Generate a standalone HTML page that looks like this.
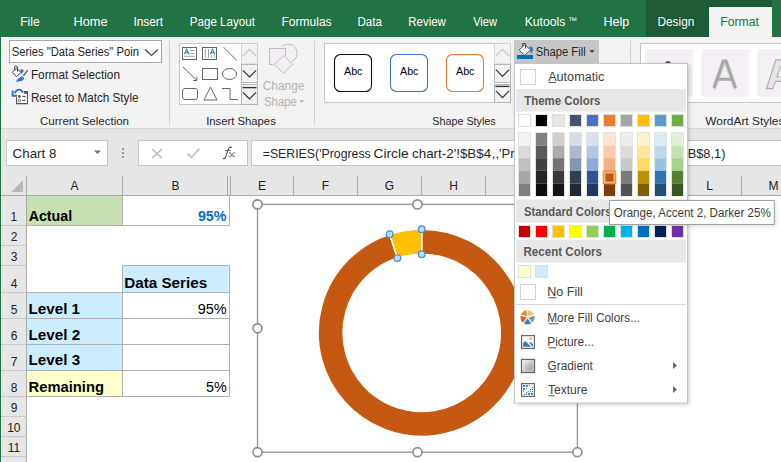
<!DOCTYPE html><html><head><meta charset="utf-8"><style>html,body{margin:0;padding:0;background:#fff;overflow:hidden}svg{display:block}</style></head><body><svg width="781" height="462" viewBox="0 0 781 462"><rect x="0" y="0" width="781" height="37" fill="#217346" />
<rect x="646" y="0" width="126" height="37" fill="#1c5b35" />
<rect x="709" y="7" width="63" height="30" fill="#f3f3f3" />
<text x="20.31" y="25.8" font-family="Liberation Sans" font-size="12.5" fill="#ffffff" textLength="19.32" lengthAdjust="spacingAndGlyphs" >File</text>
<text x="73.55" y="25.8" font-family="Liberation Sans" font-size="12.5" fill="#ffffff" textLength="33.99" lengthAdjust="spacingAndGlyphs" >Home</text>
<text x="133.40" y="25.8" font-family="Liberation Sans" font-size="12.5" fill="#ffffff" textLength="29.70" lengthAdjust="spacingAndGlyphs" >Insert</text>
<text x="189.74" y="25.8" font-family="Liberation Sans" font-size="12.5" fill="#ffffff" textLength="65.15" lengthAdjust="spacingAndGlyphs" >Page Layout</text>
<text x="281.41" y="25.8" font-family="Liberation Sans" font-size="12.5" fill="#ffffff" textLength="50.22" lengthAdjust="spacingAndGlyphs" >Formulas</text>
<text x="357.44" y="25.8" font-family="Liberation Sans" font-size="12.5" fill="#ffffff" textLength="24.56" lengthAdjust="spacingAndGlyphs" >Data</text>
<text x="408.25" y="25.8" font-family="Liberation Sans" font-size="12.5" fill="#ffffff" textLength="37.60" lengthAdjust="spacingAndGlyphs" >Review</text>
<text x="473.14" y="25.8" font-family="Liberation Sans" font-size="12.5" fill="#ffffff" textLength="23.82" lengthAdjust="spacingAndGlyphs" >View</text>
<text x="524.69" y="25.8" font-family="Liberation Sans" font-size="12.5" fill="#ffffff" textLength="40.74" lengthAdjust="spacingAndGlyphs" >Kutools</text>
<text x="603.47" y="25.8" font-family="Liberation Sans" font-size="12.5" fill="#ffffff" textLength="25.76" lengthAdjust="spacingAndGlyphs" >Help</text>
<text x="657.42" y="25.8" font-family="Liberation Sans" font-size="12.5" fill="#ffffff" textLength="36.92" lengthAdjust="spacingAndGlyphs" >Design</text>
<text x="720.19" y="25.8" font-family="Liberation Sans" font-size="12.5" fill="#217346" textLength="38.69" lengthAdjust="spacingAndGlyphs" >Format</text>
<text x="567.96" y="23.6" font-family="Liberation Sans" font-size="9.5" fill="#ffffff" textLength="9.06" lengthAdjust="spacingAndGlyphs" >™</text>
<rect x="0" y="37" width="781" height="92" fill="#f3f3f3" />
<line x1="0" y1="128.5" x2="781" y2="128.5" stroke="#d6d6d6" stroke-width="1" />
<rect x="9.5" y="40.5" width="152" height="22" fill="#ffffff" stroke="#a6a6a6" stroke-width="1" />
<text x="11.79" y="55.9" font-family="Liberation Sans" font-size="12" fill="#262626" textLength="127.12" lengthAdjust="spacingAndGlyphs" >Series &quot;Data Series&quot; Poin</text>
<polyline points="145,49.5 151.5,55.5 158,49.5" fill="none" stroke="#444" stroke-width="1.2"/>
<text x="30.93" y="78.8" font-family="Liberation Sans" font-size="12" fill="#262626" textLength="89.02" lengthAdjust="spacingAndGlyphs" >Format Selection</text>
<text x="30.94" y="101.6" font-family="Liberation Sans" font-size="12" fill="#262626" textLength="107.57" lengthAdjust="spacingAndGlyphs" >Reset to Match Style</text>
<text x="40.02" y="124.6" font-family="Liberation Sans" font-size="11.2" fill="#262626" textLength="89.01" lengthAdjust="spacingAndGlyphs" >Current Selection</text>
<line x1="169.5" y1="41" x2="169.5" y2="125" stroke="#d1d1d1" stroke-width="1" />
<g><path d="M12.2,72.3 L16.5,68.1 L20.8,72.4 L16.5,76.7 Z" fill="#fff" stroke="#3a3a3a" stroke-width="1"/><path d="M14.6,70.2 L14.6,67 Q14.8,66.2 15.8,66.2 L16.6,66.2 Q17.4,66.4 17.4,67.2 L17.4,71.5" fill="none" stroke="#3a3a3a" stroke-width="1"/><path d="M20.2,69.3 Q22,69 23.4,69.7 Q24.2,71 22.6,72.6 Q21.8,73.6 21.6,74.8 L20.8,73 Z" fill="#2e75c4"/><path d="M15.8,81.8 Q17.5,78.2 21.2,76.7 Q23.4,76.2 24.2,78.2 Q23.8,80.2 21.5,81 Q18.5,81.8 15.8,81.8 Z" fill="#2e75c4"/><path d="M21.6,77.4 Q22.6,77.8 22.8,79.4 Q22,78.6 21.6,77.4 Z" fill="#fff"/><path d="M22.8,75.2 L27.6,69.6 Q28.2,70.2 27.6,71.6 L23.8,76.2 Z" fill="#5a5a5a"/></g>
<g><path d="M14.5,93.2 Q16.5,89.6 19.2,89.6 Q21.8,89.6 22.8,92.6" fill="none" stroke="#2e75c4" stroke-width="1.9"/><path d="M12.6,90.4 L12.6,95.8 L17.8,95.8" fill="none" stroke="#2e75c4" stroke-width="1.9"/><path d="M16.6,97 L16.6,103.6 L27.4,103.6 L27.4,91.6 L23.8,91.6" fill="none" stroke="#555" stroke-width="1.2"/><rect x="17.2" y="93.8" width="9.6" height="9.2" fill="#fff"/><rect x="24.2" y="91" width="3.8" height="2.8" fill="#555"/><circle cx="19.4" cy="96.4" r="1.4" fill="#555"/><line x1="22.2" y1="96.4" x2="25.8" y2="96.4" stroke="#555" stroke-width="1.1"/><circle cx="19.4" cy="100.4" r="1.2" fill="none" stroke="#555" stroke-width="0.9"/><line x1="22.2" y1="100.4" x2="25.8" y2="100.4" stroke="#555" stroke-width="1.1"/></g>
<rect x="179.5" y="43.5" width="78" height="61" fill="#ffffff" stroke="#c6c6c6" stroke-width="1" />
<rect x="241.5" y="43.5" width="16" height="20.5" fill="#f3f3f3" stroke="#d2d2d2" stroke-width="1" />
<rect x="241.5" y="64.5" width="16" height="18" fill="#f3f3f3" stroke="#b4b4b4" stroke-width="1" />
<rect x="241.5" y="84.5" width="16" height="20" fill="#f3f3f3" stroke="#b4b4b4" stroke-width="1" />
<polyline points="242.9,56 249.5,49.4 256.1,56" fill="none" stroke="#c4c4c4" stroke-width="1.1"/>
<polyline points="242.9,70.3 249.5,76.9 256.1,70.3" fill="none" stroke="#333" stroke-width="1.2"/>
<line x1="242.5" y1="87.6" x2="256.5" y2="87.6" stroke="#333" stroke-width="1.4" />
<polyline points="242.9,92.3 249.5,98.9 256.1,92.3" fill="none" stroke="#333" stroke-width="1.2"/>
<rect x="182.5" y="47.5" width="14" height="12" fill="#fff" stroke="#666666" stroke-width="1.0" />
<path d="M184.4,54.2 L186.7,49.3 L189,54.2 M185.3,52.6 L188.1,52.6" fill="none" stroke="#3f7dc4" stroke-width="1.1"/>
<line x1="190.4" y1="50.5" x2="194.8" y2="50.5" stroke="#8a8a8a" stroke-width="0.8" />
<line x1="190.4" y1="53.4" x2="194.8" y2="53.4" stroke="#8a8a8a" stroke-width="0.8" />
<line x1="184.2" y1="56.3" x2="194.8" y2="56.3" stroke="#8a8a8a" stroke-width="0.8" />
<rect x="202.5" y="47.5" width="14" height="12" fill="#fff" stroke="#666666" stroke-width="1.0" />
<line x1="205.4" y1="49" x2="205.4" y2="57.8" stroke="#8a8a8a" stroke-width="0.8" />
<line x1="208.5" y1="49" x2="208.5" y2="57.8" stroke="#8a8a8a" stroke-width="0.8" />
<path d="M210.2,54.2 L212.5,49.3 L214.8,54.2 M211.1,52.6 L213.9,52.6" fill="none" stroke="#3f7dc4" stroke-width="1.1"/>
<line x1="211.5" y1="55.2" x2="211.5" y2="57.8" stroke="#8a8a8a" stroke-width="0.8" />
<line x1="214.6" y1="55.2" x2="214.6" y2="57.8" stroke="#8a8a8a" stroke-width="0.8" />
<line x1="223.5" y1="47.2" x2="236.9" y2="60.5" stroke="#555" stroke-width="0.9" />
<line x1="183" y1="67" x2="197" y2="80.5" stroke="#666666" stroke-width="1" />
<polyline points="196.9,76.8 196.9,80.5 193,80.5" fill="none" stroke="#666666" stroke-width="1"/>
<rect x="202.5" y="68.5" width="15" height="11" fill="none" stroke="#666666" stroke-width="1.0" />
<ellipse cx="229.5" cy="74" rx="7" ry="5.5" fill="none" stroke="#666666" stroke-width="1.0"/>
<rect x="182.5" y="88.5" width="15" height="11" fill="none" stroke="#666666" stroke-width="1.0" rx="2.5" />
<polygon points="210.5,87.2 217,100 204,100" fill="none" stroke="#666666" stroke-width="1.0"/>
<polyline points="222,88.5 230,88.5 230,99.5 238,99.5" fill="none" stroke="#666666" stroke-width="1.0"/>
<g fill="#f4eff4" stroke="#bdbdbd" stroke-width="1"><circle cx="288" cy="53.3" r="9.2" /><rect x="269.5" y="48.5" width="16" height="16" stroke="#f3f3f3" stroke-width="3.5"/><rect x="269.5" y="48.5" width="16" height="16" /><path d="M283.5,55.3 L292.5,64.3 L283.5,73.3 L274.5,64.3 Z" stroke="#f3f3f3" stroke-width="2.2"/><path d="M283.5,55.3 L292.5,64.3 L283.5,73.3 L274.5,64.3 Z" /></g>
<text x="262.81" y="90.3" font-family="Liberation Sans" font-size="12" fill="#b4b4b4" textLength="41.61" lengthAdjust="spacingAndGlyphs" >Change</text>
<text x="263.88" y="105.8" font-family="Liberation Sans" font-size="12" fill="#b4b4b4" textLength="33.12" lengthAdjust="spacingAndGlyphs" >Shape</text>
<polygon points="299.4,100.2 304.1,100.2 301.75,102.9" fill="#b4b4b4"/>
<text x="206.16" y="125.3" font-family="Liberation Sans" font-size="11.2" fill="#262626" textLength="69.65" lengthAdjust="spacingAndGlyphs" >Insert Shapes</text>
<line x1="314.5" y1="41" x2="314.5" y2="125" stroke="#d1d1d1" stroke-width="1" />
<rect x="324.5" y="43.5" width="186" height="59" fill="#ffffff" stroke="#c6c6c6" stroke-width="1" />
<rect x="494.5" y="43.5" width="16" height="20.5" fill="#f3f3f3" stroke="#d2d2d2" stroke-width="1" />
<rect x="494.5" y="64.5" width="16" height="18" fill="#f3f3f3" stroke="#b4b4b4" stroke-width="1" />
<rect x="494.5" y="84.5" width="16" height="18" fill="#f3f3f3" stroke="#b4b4b4" stroke-width="1" />
<polyline points="495.9,56 502.5,49.2 509.1,56" fill="none" stroke="#c4c4c4" stroke-width="1.1"/>
<polyline points="495.9,69.6 502.5,76.4 509.1,69.6" fill="none" stroke="#333" stroke-width="1.2"/>
<line x1="495.5" y1="86.4" x2="509.5" y2="86.4" stroke="#333" stroke-width="1.4" />
<polyline points="495.9,90.8 502.5,97.6 509.1,90.8" fill="none" stroke="#333" stroke-width="1.2"/>
<rect x="334.5" y="54.5" width="37" height="37" fill="#fff" stroke="#111" stroke-width="1.1" rx="6" />
<text x="343.97" y="74.8" font-family="Liberation Sans" font-size="11" fill="#000" textLength="18.53" lengthAdjust="spacingAndGlyphs" >Abc</text>
<rect x="390.5" y="54.5" width="37" height="37" fill="#fff" stroke="#4472c4" stroke-width="1.1" rx="6" />
<text x="399.97" y="74.8" font-family="Liberation Sans" font-size="11" fill="#000" textLength="18.53" lengthAdjust="spacingAndGlyphs" >Abc</text>
<rect x="446.5" y="54.5" width="37" height="37" fill="#fff" stroke="#ed7d31" stroke-width="1.1" rx="6" />
<text x="455.97" y="74.8" font-family="Liberation Sans" font-size="11" fill="#000" textLength="18.53" lengthAdjust="spacingAndGlyphs" >Abc</text>
<text x="432.21" y="125.2" font-family="Liberation Sans" font-size="11.2" fill="#262626" textLength="63.57" lengthAdjust="spacingAndGlyphs" >Shape Styles</text>
<rect x="514" y="40" width="85" height="23.5" fill="#c6c6c6" />
<path d="M519.2,50 L524.7,44.5 L530.5,50 L524.7,55.3 Z" fill="#fff" stroke="#3a3a3a" stroke-width="0.9"/>
<path d="M522.6,46.6 L522.6,43.5 L525.4,43.5 L525.6,48.6" fill="none" stroke="#3a3a3a" stroke-width="0.9"/>
<path d="M529.2,46.6 Q533.6,46.4 533,50.2 Q532.6,52.6 530.4,54 Q531.6,50.4 529.2,46.6 Z" fill="#3a7bc8"/>
<rect x="517" y="55" width="16" height="4" fill="#0070c0" />
<text x="535.69" y="55.6" font-family="Liberation Sans" font-size="12" fill="#262626" textLength="49.96" lengthAdjust="spacingAndGlyphs" >Shape Fill</text>
<polygon points="589.5,50 594.5,50 592,53" fill="#444"/>
<line x1="630.5" y1="41" x2="630.5" y2="125" stroke="#d1d1d1" stroke-width="1" />
<rect x="640.5" y="43.5" width="150" height="59" fill="#ffffff" stroke="#c6c6c6" stroke-width="1" />
<rect x="645" y="49" width="47.7" height="47.8" fill="#f4f0f5" />
<rect x="701.3" y="49" width="47.7" height="47.8" fill="#f4f0f5" />
<rect x="757" y="49" width="47.7" height="47.8" fill="#f4f0f5" />
<defs><filter id="sh" x="-20%" y="-20%" width="140%" height="140%"><feGaussianBlur stdDeviation="0.8"/></filter></defs>
<path d="M657,89.5 L666.6,63.2 Q668,61.6 669.4,63.2 L679.6,89.5 M661,79.3 L675.8,79.3" fill="none" stroke="#5a5a5a" stroke-width="3"/>
<path d="M714,89 L723.8,62 L725.8,62 L735.6,89" fill="none" stroke="#000" stroke-width="2.6" opacity="0.18" filter="url(#sh)"/>
<path d="M714,88 L723.3,61 L726,61 L735.4,88 M717.4,79.3 L732,79.3" fill="none" stroke="#a8a8a8" stroke-width="3.1"/>
<path d="M766.5,88.6 L772.8,88.6 L775.5,81.3 L782,81.3 L782,77 L777,77 L780.2,67 L782,65.5 L782,59.8 L775.8,59.8 Z" fill="#e4e4e4" stroke="#b0b0b0" stroke-width="1.2"/>
<text x="705.24" y="125" font-family="Liberation Sans" font-size="11.2" fill="#262626" textLength="79.18" lengthAdjust="spacingAndGlyphs" >WordArt Styles</text>
<rect x="0" y="129" width="781" height="47" fill="#e6e6e6" />
<rect x="6.5" y="140.5" width="101" height="25" fill="#ffffff" stroke="#c6c6c6" stroke-width="1" />
<text x="12.63" y="157.8" font-family="Liberation Sans" font-size="13" fill="#262626" textLength="43.76" lengthAdjust="spacingAndGlyphs" >Chart 8</text>
<polygon points="94,150.5 101,150.5 97.5,154" fill="#777"/>
<rect x="122" y="148" width="2" height="2" fill="#9a9a9a" />
<rect x="122" y="152" width="2" height="2" fill="#9a9a9a" />
<rect x="122" y="156" width="2" height="2" fill="#9a9a9a" />
<rect x="138.5" y="140.5" width="109" height="25" fill="#ffffff" stroke="#c6c6c6" stroke-width="1" />
<path d="M152,149 L162,158 M162,149 L152,158" stroke="#b8b8b8" stroke-width="1.3"/>
<polyline points="187.5,153.5 191.5,157.5 199.5,148.5" fill="none" stroke="#c2c2c2" stroke-width="1.8"/>
<path d="M222.8,158.2 Q224.2,159.6 225.4,157.6 L228.4,149 Q229.4,146.4 232,147.4" fill="none" stroke="#5a5a5a" stroke-width="1.2"/>
<line x1="225" y1="150.6" x2="230.6" y2="150.4" stroke="#5a5a5a" stroke-width="1"/>
<path d="M228.9,152.8 Q230,152.2 230.8,153.4 L232.6,156 Q233.4,157 234.8,156.2 M234.9,152.6 Q234.2,152.2 233.4,153 L230.6,156.2 Q229.6,157 228.6,156.4" fill="none" stroke="#5a5a5a" stroke-width="1"/>
<rect x="251.5" y="140.5" width="540" height="25" fill="#ffffff" stroke="#c6c6c6" stroke-width="1" />
<text x="262.72" y="158.4" font-family="Liberation Sans" font-size="13" fill="#262626" textLength="108.01" lengthAdjust="spacingAndGlyphs" >=SERIES('Progress</text>
<text x="373.51" y="158.4" font-family="Liberation Sans" font-size="13" fill="#262626" textLength="35.18" lengthAdjust="spacingAndGlyphs" >Circle</text>
<text x="412.03" y="158.4" font-family="Liberation Sans" font-size="13" fill="#262626" textLength="79.16" lengthAdjust="spacingAndGlyphs" >chart-2'!$B$4</text>
<text x="491.83" y="158.4" font-family="Liberation Sans" font-size="13" fill="#262626" textLength="98.56" lengthAdjust="spacingAndGlyphs" >,,'Progress Circle</text>
<text x="687.75" y="158.4" font-family="Liberation Sans" font-size="13" fill="#262626" textLength="37.64" lengthAdjust="spacingAndGlyphs" >B$8,1)</text>
<rect x="0" y="176" width="781" height="286" fill="#ffffff" />
<rect x="0" y="176" width="781" height="20" fill="#e6e6e6" />
<rect x="0" y="176" width="26.5" height="286" fill="#e6e6e6" />
<line x1="0" y1="195.5" x2="781" y2="195.5" stroke="#ababab" stroke-width="1" />
<line x1="26.5" y1="176" x2="26.5" y2="462" stroke="#ababab" stroke-width="1" />
<polygon points="23,180.2 23,192 11.3,192" fill="#b8b8b8"/>
<line x1="122.5" y1="176" x2="122.5" y2="195.5" stroke="#a8a8a8" stroke-width="1" />
<line x1="293.5" y1="176" x2="293.5" y2="195.5" stroke="#a8a8a8" stroke-width="1" />
<line x1="357.5" y1="176" x2="357.5" y2="195.5" stroke="#a8a8a8" stroke-width="1" />
<line x1="421.5" y1="176" x2="421.5" y2="195.5" stroke="#a8a8a8" stroke-width="1" />
<line x1="485.5" y1="176" x2="485.5" y2="195.5" stroke="#a8a8a8" stroke-width="1" />
<line x1="549.5" y1="176" x2="549.5" y2="195.5" stroke="#a8a8a8" stroke-width="1" />
<line x1="613.5" y1="176" x2="613.5" y2="195.5" stroke="#a8a8a8" stroke-width="1" />
<line x1="677.5" y1="176" x2="677.5" y2="195.5" stroke="#a8a8a8" stroke-width="1" />
<line x1="741.5" y1="176" x2="741.5" y2="195.5" stroke="#a8a8a8" stroke-width="1" />
<line x1="227.5" y1="176" x2="227.5" y2="195.5" stroke="#a8a8a8" stroke-width="1" />
<line x1="230.5" y1="176" x2="230.5" y2="195.5" stroke="#a8a8a8" stroke-width="1" />
<text x="74.5" y="189.8" font-family="Liberation Sans" font-size="12" fill="#222" text-anchor="middle">A</text>
<text x="175.5" y="189.8" font-family="Liberation Sans" font-size="12" fill="#222" text-anchor="middle">B</text>
<text x="262" y="189.8" font-family="Liberation Sans" font-size="12" fill="#222" text-anchor="middle">E</text>
<text x="325.5" y="189.8" font-family="Liberation Sans" font-size="12" fill="#222" text-anchor="middle">F</text>
<text x="389.5" y="189.8" font-family="Liberation Sans" font-size="12" fill="#222" text-anchor="middle">G</text>
<text x="453.5" y="189.8" font-family="Liberation Sans" font-size="12" fill="#222" text-anchor="middle">H</text>
<text x="517.5" y="189.8" font-family="Liberation Sans" font-size="12" fill="#222" text-anchor="middle">I</text>
<text x="581.5" y="189.8" font-family="Liberation Sans" font-size="12" fill="#222" text-anchor="middle">J</text>
<text x="645.5" y="189.8" font-family="Liberation Sans" font-size="12" fill="#222" text-anchor="middle">K</text>
<text x="709.5" y="189.8" font-family="Liberation Sans" font-size="12" fill="#222" text-anchor="middle">L</text>
<text x="773.5" y="189.8" font-family="Liberation Sans" font-size="12" fill="#222" text-anchor="middle">M</text>
<line x1="0" y1="225.5" x2="26.5" y2="225.5" stroke="#c8c8c8" stroke-width="1" />
<text x="10.60" y="220.8" font-family="Liberation Sans" font-size="12" fill="#222" textLength="6.67" lengthAdjust="spacingAndGlyphs" >1</text>
<line x1="0" y1="245.5" x2="26.5" y2="245.5" stroke="#c8c8c8" stroke-width="1" />
<text x="10.77" y="240.8" font-family="Liberation Sans" font-size="12" fill="#222" textLength="6.67" lengthAdjust="spacingAndGlyphs" >2</text>
<line x1="0" y1="265.5" x2="26.5" y2="265.5" stroke="#c8c8c8" stroke-width="1" />
<text x="10.80" y="260.8" font-family="Liberation Sans" font-size="12" fill="#222" textLength="6.67" lengthAdjust="spacingAndGlyphs" >3</text>
<line x1="0" y1="292.5" x2="26.5" y2="292.5" stroke="#c8c8c8" stroke-width="1" />
<text x="10.80" y="287.8" font-family="Liberation Sans" font-size="12" fill="#222" textLength="6.67" lengthAdjust="spacingAndGlyphs" >4</text>
<line x1="0" y1="318.5" x2="26.5" y2="318.5" stroke="#c8c8c8" stroke-width="1" />
<text x="10.77" y="313.8" font-family="Liberation Sans" font-size="12" fill="#222" textLength="6.67" lengthAdjust="spacingAndGlyphs" >5</text>
<line x1="0" y1="344.5" x2="26.5" y2="344.5" stroke="#c8c8c8" stroke-width="1" />
<text x="10.72" y="339.8" font-family="Liberation Sans" font-size="12" fill="#222" textLength="6.67" lengthAdjust="spacingAndGlyphs" >6</text>
<line x1="0" y1="370.5" x2="26.5" y2="370.5" stroke="#c8c8c8" stroke-width="1" />
<text x="10.77" y="365.8" font-family="Liberation Sans" font-size="12" fill="#222" textLength="6.67" lengthAdjust="spacingAndGlyphs" >7</text>
<line x1="0" y1="396.5" x2="26.5" y2="396.5" stroke="#c8c8c8" stroke-width="1" />
<text x="10.77" y="391.8" font-family="Liberation Sans" font-size="12" fill="#222" textLength="6.67" lengthAdjust="spacingAndGlyphs" >8</text>
<line x1="0" y1="416.5" x2="26.5" y2="416.5" stroke="#c8c8c8" stroke-width="1" />
<text x="10.75" y="411.8" font-family="Liberation Sans" font-size="12" fill="#222" textLength="6.67" lengthAdjust="spacingAndGlyphs" >9</text>
<line x1="0" y1="436.5" x2="26.5" y2="436.5" stroke="#c8c8c8" stroke-width="1" />
<text x="7.21" y="431.8" font-family="Liberation Sans" font-size="12" fill="#222" textLength="13.35" lengthAdjust="spacingAndGlyphs" >10</text>
<line x1="0" y1="456.5" x2="26.5" y2="456.5" stroke="#c8c8c8" stroke-width="1" />
<text x="7.71" y="451.8" font-family="Liberation Sans" font-size="12" fill="#222" textLength="12.46" lengthAdjust="spacingAndGlyphs" >11</text>
<rect x="27" y="196" width="95.5" height="29.5" fill="#c6e0b4" />
<rect x="122.5" y="265.5" width="106" height="27" fill="#ccecff" />
<rect x="27" y="292.5" width="95.5" height="78" fill="#ccecff" />
<rect x="27" y="370.5" width="95.5" height="26" fill="#ffffcc" />
<g stroke="#b1b1b1" stroke-width="1" fill="none"><path d="M122.5,195.5 V225.5 M229.5,195.5 V225.5 M26.5,225.5 H229.5"/><path d="M122.5,265.5 H229.5 V396.5 H26.5 M122.5,265.5 V396.5 M26.5,292.5 H229.5 M26.5,318.5 H229.5 M26.5,344.5 H229.5 M26.5,370.5 H229.5"/></g>
<text x="28.64" y="221.1" font-family="Liberation Sans" font-size="15.35" font-weight="bold" fill="#000" textLength="43.57" lengthAdjust="spacingAndGlyphs" >Actual</text>
<text x="197.90" y="221.1" font-family="Liberation Sans" font-size="15.35" font-weight="bold" fill="#0070c0" textLength="28.58" lengthAdjust="spacingAndGlyphs" >95%</text>
<text x="124.27" y="287.8" font-family="Liberation Sans" font-size="15.35" font-weight="bold" fill="#000" textLength="82.84" lengthAdjust="spacingAndGlyphs" >Data Series</text>
<text x="28.58" y="314.2" font-family="Liberation Sans" font-size="15.35" font-weight="bold" fill="#000" textLength="51.46" lengthAdjust="spacingAndGlyphs" >Level 1</text>
<text x="197.71" y="314.2" font-family="Liberation Sans" font-size="15.35" fill="#000" textLength="28.88" lengthAdjust="spacingAndGlyphs" >95%</text>
<text x="28.57" y="339.7" font-family="Liberation Sans" font-size="15.35" font-weight="bold" fill="#000" textLength="51.62" lengthAdjust="spacingAndGlyphs" >Level 2</text>
<text x="28.57" y="365.3" font-family="Liberation Sans" font-size="15.35" font-weight="bold" fill="#000" textLength="51.58" lengthAdjust="spacingAndGlyphs" >Level 3</text>
<text x="28.60" y="391.6" font-family="Liberation Sans" font-size="15.35" font-weight="bold" fill="#000" textLength="75.38" lengthAdjust="spacingAndGlyphs" >Remaining</text>
<text x="205.93" y="391.6" font-family="Liberation Sans" font-size="15.35" fill="#000" textLength="20.68" lengthAdjust="spacingAndGlyphs" >5%</text>
<path d="M421.70,229.20 A103.6,103.6 0 1 1 389.69,234.27 L397.41,258.05 A78.6,78.6 0 1 0 421.70,254.20 Z" fill="#c65911" stroke="#fff" stroke-width="1.5"/>
<path d="M389.69,234.27 A103.6,103.6 0 0 1 421.70,229.20 L421.70,254.20 A78.6,78.6 0 0 0 397.41,258.05 Z" fill="#ffc000" stroke="#fff" stroke-width="1.5"/>
<circle cx="421.70" cy="229.20" r="3.3" fill="#c5dcf3" stroke="#3d8fd8" stroke-width="1.2"/>
<circle cx="389.69" cy="234.27" r="3.3" fill="#c5dcf3" stroke="#3d8fd8" stroke-width="1.2"/>
<circle cx="397.41" cy="258.05" r="3.3" fill="#c5dcf3" stroke="#3d8fd8" stroke-width="1.2"/>
<circle cx="421.70" cy="254.20" r="3.3" fill="#c5dcf3" stroke="#3d8fd8" stroke-width="1.2"/>
<rect x="257.5" y="204.4" width="319.9" height="247.79999999999998" fill="none" stroke="#9a9a9a" stroke-width="1.4"/>
<circle cx="257.5" cy="204.4" r="4.5" fill="#fff" stroke="#8f8f8f" stroke-width="1.7"/>
<circle cx="257.5" cy="328.3" r="4.5" fill="#fff" stroke="#8f8f8f" stroke-width="1.7"/>
<circle cx="257.5" cy="452.2" r="4.5" fill="#fff" stroke="#8f8f8f" stroke-width="1.7"/>
<circle cx="417.45" cy="204.4" r="4.5" fill="#fff" stroke="#8f8f8f" stroke-width="1.7"/>
<circle cx="417.45" cy="452.2" r="4.5" fill="#fff" stroke="#8f8f8f" stroke-width="1.7"/>
<circle cx="577.4" cy="204.4" r="4.5" fill="#fff" stroke="#8f8f8f" stroke-width="1.7"/>
<circle cx="577.4" cy="328.3" r="4.5" fill="#fff" stroke="#8f8f8f" stroke-width="1.7"/>
<circle cx="577.4" cy="452.2" r="4.5" fill="#fff" stroke="#8f8f8f" stroke-width="1.7"/>
<defs><filter id="msh" x="-10%" y="-10%" width="120%" height="120%"><feGaussianBlur stdDeviation="2"/></filter></defs>
<rect x="516.0" y="65.0" width="173.0" height="339.5" fill="rgba(0,0,0,0.22)" filter="url(#msh)"/>
<rect x="514.5" y="63.5" width="173.0" height="339.5" fill="#ffffff" stroke="#c6c6c6" stroke-width="1" />
<rect x="520.5" y="69.5" width="15" height="15" fill="#fff" stroke="#d4d4d4" stroke-width="1" />
<text x="548.17" y="80.6" font-family="Liberation Sans" font-size="12" fill="#404040" textLength="56.17" lengthAdjust="spacingAndGlyphs" >Automatic</text>
<line x1="548.5" y1="82.6" x2="556" y2="82.6" stroke="#404040" stroke-width="0.9" />
<rect x="516" y="89" width="170" height="22.599999999999994" fill="#e8e8e8" />
<text x="524.19" y="104.7" font-family="Liberation Sans" font-size="12" font-weight="bold" fill="#595959" textLength="76.28" lengthAdjust="spacingAndGlyphs" >Theme Colors</text>
<rect x="518.5" y="114.5" width="12" height="12" fill="#ffffff" stroke="#dedede" stroke-width="1" />
<rect x="518.5" y="132.5" width="12" height="63.5" fill="#fff" stroke="#e2e2e2" stroke-width="1" />
<rect x="519.0" y="133.0" width="11" height="12.6" fill="#f2f2f2" />
<rect x="519.0" y="145.6" width="11" height="12.6" fill="#d9d9d9" />
<rect x="519.0" y="158.2" width="11" height="12.6" fill="#bfbfbf" />
<rect x="519.0" y="170.8" width="11" height="12.6" fill="#a6a6a6" />
<rect x="519.0" y="183.4" width="11" height="12.6" fill="#808080" />
<rect x="535.5" y="114.5" width="12" height="12" fill="#000000" stroke="#dedede" stroke-width="1" />
<rect x="535.5" y="132.5" width="12" height="63.5" fill="#fff" stroke="#e2e2e2" stroke-width="1" />
<rect x="536.0" y="133.0" width="11" height="12.6" fill="#808080" />
<rect x="536.0" y="145.6" width="11" height="12.6" fill="#595959" />
<rect x="536.0" y="158.2" width="11" height="12.6" fill="#404040" />
<rect x="536.0" y="170.8" width="11" height="12.6" fill="#262626" />
<rect x="536.0" y="183.4" width="11" height="12.6" fill="#0d0d0d" />
<rect x="552.5" y="114.5" width="12" height="12" fill="#e7e6e6" stroke="#dedede" stroke-width="1" />
<rect x="552.5" y="132.5" width="12" height="63.5" fill="#fff" stroke="#e2e2e2" stroke-width="1" />
<rect x="553.0" y="133.0" width="11" height="12.6" fill="#d0cece" />
<rect x="553.0" y="145.6" width="11" height="12.6" fill="#aeaaaa" />
<rect x="553.0" y="158.2" width="11" height="12.6" fill="#757171" />
<rect x="553.0" y="170.8" width="11" height="12.6" fill="#3b3838" />
<rect x="553.0" y="183.4" width="11" height="12.6" fill="#161616" />
<rect x="569.5" y="114.5" width="12" height="12" fill="#44546a" stroke="#dedede" stroke-width="1" />
<rect x="569.5" y="132.5" width="12" height="63.5" fill="#fff" stroke="#e2e2e2" stroke-width="1" />
<rect x="570.0" y="133.0" width="11" height="12.6" fill="#d6dce4" />
<rect x="570.0" y="145.6" width="11" height="12.6" fill="#adb9ca" />
<rect x="570.0" y="158.2" width="11" height="12.6" fill="#8497b0" />
<rect x="570.0" y="170.8" width="11" height="12.6" fill="#333f4f" />
<rect x="570.0" y="183.4" width="11" height="12.6" fill="#222b35" />
<rect x="586.5" y="114.5" width="12" height="12" fill="#4472c4" stroke="#dedede" stroke-width="1" />
<rect x="586.5" y="132.5" width="12" height="63.5" fill="#fff" stroke="#e2e2e2" stroke-width="1" />
<rect x="587.0" y="133.0" width="11" height="12.6" fill="#d9e1f2" />
<rect x="587.0" y="145.6" width="11" height="12.6" fill="#b4c6e7" />
<rect x="587.0" y="158.2" width="11" height="12.6" fill="#8ea9db" />
<rect x="587.0" y="170.8" width="11" height="12.6" fill="#305496" />
<rect x="587.0" y="183.4" width="11" height="12.6" fill="#203764" />
<rect x="603.5" y="114.5" width="12" height="12" fill="#ed7d31" stroke="#dedede" stroke-width="1" />
<rect x="603.5" y="132.5" width="12" height="63.5" fill="#fff" stroke="#e2e2e2" stroke-width="1" />
<rect x="604.0" y="133.0" width="11" height="12.6" fill="#fce4d6" />
<rect x="604.0" y="145.6" width="11" height="12.6" fill="#f8cbad" />
<rect x="604.0" y="158.2" width="11" height="12.6" fill="#f4b084" />
<rect x="604.0" y="170.8" width="11" height="12.6" fill="#c65911" />
<rect x="604.0" y="183.4" width="11" height="12.6" fill="#833c0c" />
<rect x="620.5" y="114.5" width="12" height="12" fill="#a5a5a5" stroke="#dedede" stroke-width="1" />
<rect x="620.5" y="132.5" width="12" height="63.5" fill="#fff" stroke="#e2e2e2" stroke-width="1" />
<rect x="621.0" y="133.0" width="11" height="12.6" fill="#ededed" />
<rect x="621.0" y="145.6" width="11" height="12.6" fill="#dbdbdb" />
<rect x="621.0" y="158.2" width="11" height="12.6" fill="#c9c9c9" />
<rect x="621.0" y="170.8" width="11" height="12.6" fill="#7b7b7b" />
<rect x="621.0" y="183.4" width="11" height="12.6" fill="#525252" />
<rect x="637.5" y="114.5" width="12" height="12" fill="#ffc000" stroke="#dedede" stroke-width="1" />
<rect x="637.5" y="132.5" width="12" height="63.5" fill="#fff" stroke="#e2e2e2" stroke-width="1" />
<rect x="638.0" y="133.0" width="11" height="12.6" fill="#fff2cc" />
<rect x="638.0" y="145.6" width="11" height="12.6" fill="#ffe699" />
<rect x="638.0" y="158.2" width="11" height="12.6" fill="#ffd966" />
<rect x="638.0" y="170.8" width="11" height="12.6" fill="#bf8f00" />
<rect x="638.0" y="183.4" width="11" height="12.6" fill="#806000" />
<rect x="654.5" y="114.5" width="12" height="12" fill="#5b9bd5" stroke="#dedede" stroke-width="1" />
<rect x="654.5" y="132.5" width="12" height="63.5" fill="#fff" stroke="#e2e2e2" stroke-width="1" />
<rect x="655.0" y="133.0" width="11" height="12.6" fill="#ddebf7" />
<rect x="655.0" y="145.6" width="11" height="12.6" fill="#bdd7ee" />
<rect x="655.0" y="158.2" width="11" height="12.6" fill="#9bc2e6" />
<rect x="655.0" y="170.8" width="11" height="12.6" fill="#2f75b5" />
<rect x="655.0" y="183.4" width="11" height="12.6" fill="#1f4e78" />
<rect x="671.5" y="114.5" width="12" height="12" fill="#70ad47" stroke="#dedede" stroke-width="1" />
<rect x="671.5" y="132.5" width="12" height="63.5" fill="#fff" stroke="#e2e2e2" stroke-width="1" />
<rect x="672.0" y="133.0" width="11" height="12.6" fill="#e2efda" />
<rect x="672.0" y="145.6" width="11" height="12.6" fill="#c6e0b4" />
<rect x="672.0" y="158.2" width="11" height="12.6" fill="#a9d08e" />
<rect x="672.0" y="170.8" width="11" height="12.6" fill="#548235" />
<rect x="672.0" y="183.4" width="11" height="12.6" fill="#375623" />
<rect x="603.5" y="171.5" width="12" height="12" fill="#c65911" stroke="#f29436" stroke-width="1.6" />
<rect x="604.8" y="172.8" width="9.4" height="9.4" fill="#c65911" stroke="#fde29b" stroke-width="1" />
<rect x="516" y="199.5" width="170" height="23.19999999999999" fill="#e8e8e8" />
<text x="523.96" y="215.5" font-family="Liberation Sans" font-size="12" font-weight="bold" fill="#595959" textLength="87.50" lengthAdjust="spacingAndGlyphs" >Standard Colors</text>
<rect x="518.5" y="225.5" width="12" height="12" fill="#c00000" stroke="#dedede" stroke-width="1" />
<rect x="535.5" y="225.5" width="12" height="12" fill="#ff0000" stroke="#dedede" stroke-width="1" />
<rect x="552.5" y="225.5" width="12" height="12" fill="#ffc000" stroke="#dedede" stroke-width="1" />
<rect x="569.5" y="225.5" width="12" height="12" fill="#ffff00" stroke="#dedede" stroke-width="1" />
<rect x="586.5" y="225.5" width="12" height="12" fill="#92d050" stroke="#dedede" stroke-width="1" />
<rect x="603.5" y="225.5" width="12" height="12" fill="#00b050" stroke="#dedede" stroke-width="1" />
<rect x="620.5" y="225.5" width="12" height="12" fill="#00b0f0" stroke="#dedede" stroke-width="1" />
<rect x="637.5" y="225.5" width="12" height="12" fill="#0070c0" stroke="#dedede" stroke-width="1" />
<rect x="654.5" y="225.5" width="12" height="12" fill="#002060" stroke="#dedede" stroke-width="1" />
<rect x="671.5" y="225.5" width="12" height="12" fill="#7030a0" stroke="#dedede" stroke-width="1" />
<rect x="516" y="239.7" width="170" height="22.900000000000034" fill="#e8e8e8" />
<text x="523.52" y="255.6" font-family="Liberation Sans" font-size="12" font-weight="bold" fill="#595959" textLength="78.47" lengthAdjust="spacingAndGlyphs" >Recent Colors</text>
<rect x="518.5" y="265.5" width="12" height="12" fill="#ffffcc" stroke="#dedede" stroke-width="1" />
<rect x="535.5" y="265.5" width="12" height="12" fill="#ccecff" stroke="#dedede" stroke-width="1" />
<rect x="520.5" y="284.5" width="15" height="15" fill="#fff" stroke="#d4d4d4" stroke-width="1" />
<text x="547.16" y="296" font-family="Liberation Sans" font-size="12" fill="#404040" textLength="35.67" lengthAdjust="spacingAndGlyphs" >No Fill</text>
<line x1="548.5" y1="297.8" x2="556.5" y2="297.8" stroke="#404040" stroke-width="0.9" />
<line x1="516" y1="304.5" x2="686" y2="304.5" stroke="#d8d8d8" stroke-width="1" />
<path d="M527.5,317.3 L520.27,314.95 A7.6,7.6 0 0 1 527.50,309.70 Z" fill="#ed8b3e" stroke="#fff" stroke-width="1.1" stroke-linejoin="round"/>
<path d="M527.5,317.3 L527.50,309.70 A7.6,7.6 0 0 1 534.73,314.95 Z" fill="#f0c27c" stroke="#fff" stroke-width="1.1" stroke-linejoin="round"/>
<path d="M527.5,317.3 L534.73,314.95 A7.6,7.6 0 0 1 531.97,323.45 Z" fill="#6ea68a" stroke="#fff" stroke-width="1.1" stroke-linejoin="round"/>
<path d="M527.5,317.3 L531.97,323.45 A7.6,7.6 0 0 1 523.03,323.45 Z" fill="#3f7fc3" stroke="#fff" stroke-width="1.1" stroke-linejoin="round"/>
<path d="M527.5,317.3 L523.03,323.45 A7.6,7.6 0 0 1 520.27,314.95 Z" fill="#e0593a" stroke="#fff" stroke-width="1.1" stroke-linejoin="round"/>
<text x="547.22" y="322" font-family="Liberation Sans" font-size="12" fill="#404040" textLength="92.84" lengthAdjust="spacingAndGlyphs" >More Fill Colors...</text>
<line x1="548.5" y1="323.8" x2="558.5" y2="323.8" stroke="#404040" stroke-width="0.9" />
<rect x="521.6" y="335.6" width="12.8" height="12.8" fill="#fff" stroke="#666" stroke-width="1.2" />
<circle cx="530.5" cy="338.5" r="1.5" fill="#f0b860"/>
<path d="M523.1,346.8 L523.1,343.1 L525.4,341.0 L530.9,346.8 Z" fill="#3b78bf"/>
<path d="M529.3,342.2 L531.1,342.2 L533,344.6 L533,346.6 L532.2,346.8 Z" fill="#3b78bf"/>
<text x="547.22" y="345.6" font-family="Liberation Sans" font-size="12" fill="#404040" textLength="46.86" lengthAdjust="spacingAndGlyphs" >Picture...</text>
<line x1="548.5" y1="347.8" x2="556" y2="347.8" stroke="#404040" stroke-width="0.9" />
<defs><linearGradient id="gr" x1="0" y1="0" x2="1" y2="1"><stop offset="0" stop-color="#fafafa"/><stop offset="1" stop-color="#8a8a8a"/></linearGradient></defs>
<rect x="521.5" y="359.5" width="13" height="13" fill="url(#gr)" stroke="#666" stroke-width="1.3" />
<rect x="522.9" y="360.9" width="10.2" height="10.2" fill="none" stroke="rgba(255,255,255,0.7)" stroke-width="0.8" />
<text x="547.61" y="369.7" font-family="Liberation Sans" font-size="12" fill="#404040" textLength="45.18" lengthAdjust="spacingAndGlyphs" >Gradient</text>
<line x1="548.5" y1="371.5" x2="556" y2="371.5" stroke="#404040" stroke-width="0.9" />
<polygon points="673,362 677,365.5 673,369" fill="#666"/>
<rect x="521.6" y="383.6" width="12.8" height="12.8" fill="#fff" stroke="#666" stroke-width="1.2" />
<rect x="522.9499999999999" y="384.95" width="1.9" height="1.9" fill="#2f6fb8" />
<rect x="525.8499999999999" y="384.95" width="1.9" height="1.9" fill="#2f6fb8" />
<rect x="522.9499999999999" y="388.05" width="1.9" height="1.9" fill="#2f6fb8" />
<rect x="527.9499999999999" y="392.95" width="1.9" height="1.9" fill="#2f6fb8" />
<rect x="530.9499999999999" y="392.95" width="1.9" height="1.9" fill="#2f6fb8" />
<circle cx="529.5" cy="385.5" r="0.65" fill="#3b78bf"/>
<circle cx="532.4" cy="387.4" r="0.65" fill="#3b78bf"/>
<circle cx="526.4" cy="388.4" r="0.65" fill="#3b78bf"/>
<circle cx="530.5" cy="389.4" r="0.65" fill="#3b78bf"/>
<circle cx="532.4" cy="389.4" r="0.65" fill="#3b78bf"/>
<circle cx="523.5" cy="391.3" r="0.65" fill="#3b78bf"/>
<circle cx="528.3" cy="391.3" r="0.65" fill="#3b78bf"/>
<circle cx="530.5" cy="391.3" r="0.65" fill="#3b78bf"/>
<circle cx="532.4" cy="391.3" r="0.65" fill="#3b78bf"/>
<circle cx="526.4" cy="392.5" r="0.65" fill="#3b78bf"/>
<circle cx="524.5" cy="394.4" r="0.65" fill="#3b78bf"/>
<circle cx="526.4" cy="394.4" r="0.65" fill="#3b78bf"/>
<text x="547.93" y="394" font-family="Liberation Sans" font-size="12" fill="#404040" textLength="39.61" lengthAdjust="spacingAndGlyphs" >Texture</text>
<line x1="548.5" y1="395.8" x2="554.5" y2="395.8" stroke="#404040" stroke-width="0.9" />
<polygon points="673,386 677,389.5 673,393" fill="#666"/>
<rect x="611" y="201.5" width="164.5" height="24.5" fill="rgba(0,0,0,0.15)" filter="url(#msh)"/>
<rect x="609.5" y="200.5" width="164.8" height="24" fill="#ffffff" stroke="#a0a0a0" stroke-width="1" />
<text x="613.85" y="217.1" font-family="Liberation Sans" font-size="12" fill="#3b3b3b" textLength="156.83" lengthAdjust="spacingAndGlyphs" >Orange, Accent 2, Darker 25%</text>
<rect x="0" y="0" width="1" height="462" fill="#217346" /></svg></body></html>
